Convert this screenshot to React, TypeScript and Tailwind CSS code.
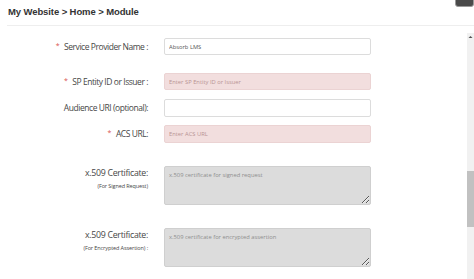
import React from "react";

function Label({ text, req }: { text: string; req?: boolean }) {
  return (
    <div className="w-[148px] flex items-center justify-end text-[8.5px] tracking-[-0.45px] text-[#474747] leading-[10px]">
      {req && <span className="text-[#d9534f] text-[7px] mr-[5px] relative -top-[1px]">*</span>}
      <span>{text}</span>
    </div>
  );
}

export default function App() {
  return (
    <div className="w-[474px] h-[279px] overflow-hidden bg-white relative font-['Open_Sans',sans-serif]">
      <div className="h-[26px] border-b border-[#eeeeee] ml-[7px] pl-[1px] pt-[6px]">
        <div className="font-['Liberation_Sans',Arial,sans-serif] font-bold text-[9.5px] leading-[12px] text-[#333] tracking-[-0.1px]">
          My Website &gt; Home &gt; Module
        </div>
      </div>
      <div className="absolute right-0 -top-[10px] w-[19px] h-[17px] rounded-[3px] bg-[#4a4a4a] border border-[#9a9a9a]" />
      <div className="flex">
        <div className="flex-1">
          <div className="flex mt-[12px] h-[17px]">
            <Label text="Service Provider Name :" req />
            <input
              className="ml-[16px] w-[207px] h-[17px] border border-[#dcdcdc] rounded-[2px] bg-white px-[4px] text-[5.8px] text-[#555] outline-none"
              defaultValue="Absorb LMS"
            />
          </div>
          <div className="flex mt-[18px] h-[17px]">
            <Label text="SP Entity ID or Issuer :" req />
            <input
              className="ml-[16px] w-[207px] h-[17px] border border-[#ebd3d3] rounded-[2px] bg-[#f2dede] px-[4px] text-[5.8px] text-[#555] outline-none placeholder:text-[#b89494]"
              placeholder="Enter SP Entity ID or Issuer"
            />
          </div>
          <div className="flex mt-[9px] h-[18px]">
            <Label text="Audience URI (optional):" />
            <input
              className="ml-[16px] w-[207px] h-[18px] border border-[#dcdcdc] rounded-[2px] bg-white px-[4px] text-[5.8px] text-[#555] outline-none"
            />
          </div>
          <div className="flex mt-[8px] h-[18px]">
            <Label text="ACS URL:" req />
            <input
              className="ml-[16px] w-[207px] h-[18px] border border-[#ebd3d3] rounded-[2px] bg-[#f2dede] px-[4px] text-[5.8px] text-[#555] outline-none placeholder:text-[#b89494]"
              placeholder="Enter ACS URL"
            />
          </div>
          <div className="flex mt-[23px]">
            <div className="w-[148px] flex flex-col items-end pt-[2px] text-[#474747]">
              <div className="text-[8.8px] leading-[11px] tracking-[-0.3px]">x.509 Certificate:</div>
              <div className="text-[5.5px] leading-[8px] mt-[3px] tracking-[-0.1px]">(For Signed Request)</div>
            </div>
            <textarea
              className="ml-[16px] w-[207px] h-[39px] border border-[#cfcfcf] rounded-[2px] bg-[#dcdcdc] px-[4px] pt-[4px] text-[5.8px] leading-[8px] text-[#555] outline-none placeholder:text-[#8e8e8e]"
              placeholder="x.509 certificate for signed request"
            />
          </div>
          <div className="flex mt-[23px]">
            <div className="w-[148px] flex flex-col items-end pt-[2px] text-[#474747]">
              <div className="text-[8.8px] leading-[11px] tracking-[-0.3px]">x.509 Certificate:</div>
              <div className="text-[5.5px] leading-[8px] mt-[3px] tracking-[-0.1px]">(For Encrypted Assertion) :</div>
            </div>
            <textarea
              className="ml-[16px] w-[207px] h-[39px] border border-[#cfcfcf] rounded-[2px] bg-[#dcdcdc] px-[4px] pt-[4px] text-[5.8px] leading-[8px] text-[#555] outline-none placeholder:text-[#8e8e8e]"
              placeholder="x.509 certificate for encrypted assertion"
            />
          </div>
        </div>
        <div className="w-[7px] mt-[7px] h-[246px] bg-[#f1f1f1] flex flex-col items-center">
          <svg width="5" height="4" viewBox="0 0 5 4" className="mt-[2px]">
            <path d="M0.5 3 L2.5 1 L4.5 3 Z" fill="#505050" />
          </svg>
          <div className="w-[7px] h-[56px] bg-[#c1c1c1] mt-[132px]" />
        </div>
      </div>
    </div>
  );
}
